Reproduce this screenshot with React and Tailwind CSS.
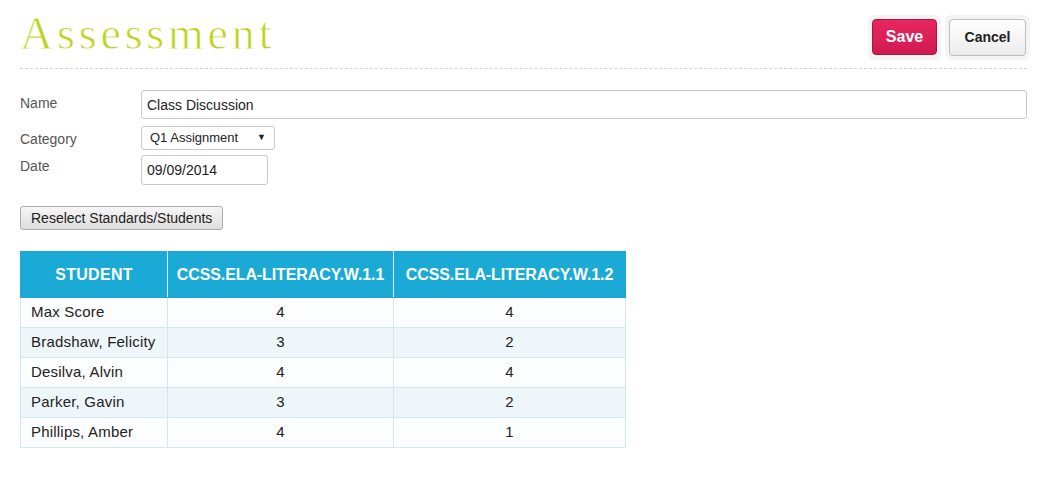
import React from 'react';

const rows = [
    { name: 'Max Score', a: 4, b: 4 },
    { name: 'Bradshaw, Felicity', a: 3, b: 2 },
    { name: 'Desilva, Alvin', a: 4, b: 4 },
    { name: 'Parker, Gavin', a: 3, b: 2 },
    { name: 'Phillips, Amber', a: 4, b: 1 },
];

const sans = { fontFamily: '"Liberation Sans", Arial, sans-serif' };

export default function App() {
    return (
        <div className="w-[1050px] h-[478px] bg-white px-5 pt-[10px] text-[#333]" style={sans}>
            <div className="flex items-start justify-between border-b border-dashed border-[#d0d0d0] pb-[8px] mr-[3px]">
                <h1
                    className="text-[46px] leading-[48px] text-[#bdd320] tracking-[3.8px] [-webkit-text-stroke:0.8px_white]"
                    style={{ fontFamily: '"Liberation Serif", serif' }}
                >
                    Assessment
                </h1>
                <div className="flex gap-[4px] mt-[5px] mr-[-3px]">
                    <div className="p-[4px] bg-[#f4f4f4] rounded-[6px]">
                        <button className="w-[65px] h-[36px] rounded-[4px] border border-[#a8173f] bg-gradient-to-b from-[#e8265f] to-[#d11a52] text-white text-[16px] font-bold">
                            Save
                        </button>
                    </div>
                    <div className="p-[4px] bg-[#f4f4f4] rounded-[6px]">
                        <button className="w-[77px] h-[37px] rounded-[4px] border border-[#bcbcbc] bg-gradient-to-b from-white to-[#ececec] text-[#222] text-[14px] font-semibold">
                            Cancel
                        </button>
                    </div>
                </div>
            </div>

            <div className="mt-[21px] grid grid-cols-[121px_1fr] items-start text-[14px] mr-[3px]">
                <label className="text-[#555] pt-[3px]">Name</label>
                <input
                    className="h-[29px] w-full border border-[#c8c8c8] rounded-[3px] px-[5px] text-[14px] text-[#222]"
                    defaultValue="Class Discussion"
                    style={sans}
                />
                <label className="text-[#555] mt-[8px] pt-[2px]">Category</label>
                <div className="mt-[7px] w-[134px] h-[24px] border border-[#c8c8c8] rounded-[3px] flex items-center justify-between px-[8px] text-[13px] text-[#222]">
                    <span>Q1 Assignment</span>
                    <span className="text-[9px]">▼</span>
                </div>
                <label className="text-[#555] mt-[6px]">Date</label>
                <input
                    className="mt-[5px] h-[30px] w-[127px] border border-[#c8c8c8] rounded-[3px] px-[5px] text-[14px] text-[#222]"
                    defaultValue="09/09/2014"
                    style={sans}
                />
            </div>

            <button className="mt-[21px] h-[24px] px-[10px] border border-[#aaa] rounded-[3px] bg-gradient-to-b from-[#f6f6f6] to-[#dedede] text-[14px] text-[#222]">
                Reselect Standards/Students
            </button>

            <table className="mt-[21px] border-collapse text-[15px]">
                <thead>
                    <tr className="bg-[#1ba9d5] text-white h-[46px]">
                        <th className="w-[147px] border border-[#1ba9d5] border-r-[#dceff6] font-bold text-[16px] tracking-[0.3px]">STUDENT</th>
                        <th className="w-[226px] border border-[#1ba9d5] border-r-[#dceff6] font-bold text-[16px] tracking-[-0.1px]">CCSS.ELA-LITERACY.W.1.1</th>
                        <th className="w-[232px] border border-[#1ba9d5] font-bold text-[16px] tracking-[-0.1px]">CCSS.ELA-LITERACY.W.1.2</th>
                    </tr>
                </thead>
                <tbody>
                    {rows.map((r, i) => (
                        <tr key={r.name} className={i % 2 === 0 ? 'bg-[#fbfdfe] h-[30px]' : 'bg-[#eff6f9] h-[30px]'}>
                            <td className="border border-[#cfe8f1] pl-[10px] text-[#222] tracking-[0.2px]">{r.name}</td>
                            <td className="border border-[#cfe8f1] text-center text-[#222]">{r.a}</td>
                            <td className="border border-[#cfe8f1] text-center text-[#222]">{r.b}</td>
                        </tr>
                    ))}
                </tbody>
            </table>
        </div>
    );
}
